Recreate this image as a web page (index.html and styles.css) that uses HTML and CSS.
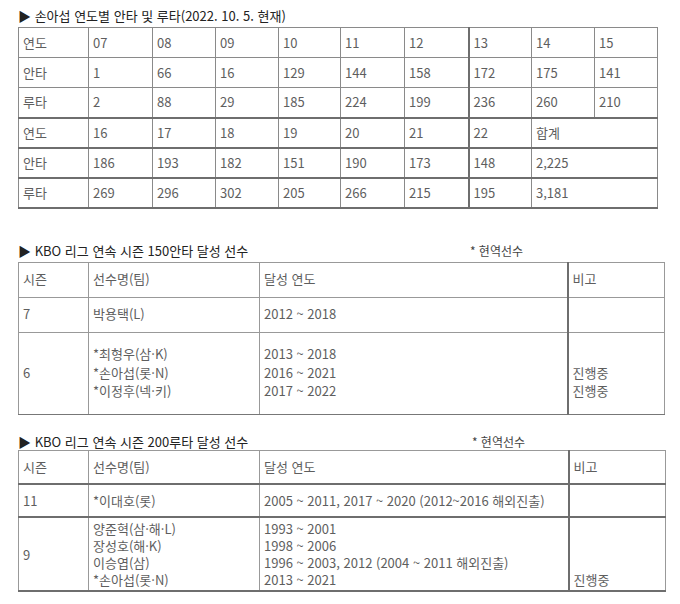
FILE: index.html
```html
<!DOCTYPE html>
<html lang="ko">
<head>
<meta charset="utf-8">
<link rel="stylesheet" href="styles.css">
</head>
<body>
<div class="page">
  <div class="title t1">▶ 손아섭 연도별 안타 및 루타(2022. 10. 5. 현재)</div>
  <table class="grid g1">
    <colgroup>
      <col style="width:70px"><col style="width:64px"><col style="width:63px"><col style="width:63px"><col style="width:62px"><col style="width:64px"><col style="width:64px"><col style="width:63px"><col style="width:63px"><col style="width:63px">
    </colgroup>
    <tr><td>연도</td><td>07</td><td>08</td><td>09</td><td>10</td><td>11</td><td class="sep">12</td><td>13</td><td>14</td><td>15</td></tr>
    <tr><td>안타</td><td>1</td><td>66</td><td>16</td><td>129</td><td>144</td><td class="sep">158</td><td>172</td><td>175</td><td>141</td></tr>
    <tr class="thick"><td>루타</td><td>2</td><td>88</td><td>29</td><td>185</td><td>224</td><td class="sep">199</td><td>236</td><td>260</td><td>210</td></tr>
    <tr class="thick"><td>연도</td><td>16</td><td>17</td><td>18</td><td>19</td><td>20</td><td class="sep">21</td><td>22</td><td colspan="2">합계</td></tr>
    <tr class="thick"><td>안타</td><td>186</td><td>193</td><td>182</td><td>151</td><td>190</td><td class="sep">173</td><td>148</td><td colspan="2">2,225</td></tr>
    <tr class="thick"><td>루타</td><td>269</td><td>296</td><td>302</td><td>205</td><td>266</td><td class="sep">215</td><td>195</td><td colspan="2">3,181</td></tr>
  </table>

  <div class="title t2"><span>▶ KBO 리그 연속 시즌 150안타 달성 선수</span><span class="note">* 현역선수</span></div>
  <table class="grid g2">
    <colgroup>
      <col style="width:70px"><col style="width:171px"><col style="width:308px"><col style="width:97px">
    </colgroup>
    <tr class="r35"><td>시즌</td><td>선수명(팀)</td><td class="sep">달성 연도</td><td>비고</td></tr>
    <tr class="r35"><td>7</td><td>박용택(L)</td><td class="sep">2012 ~ 2018</td><td></td></tr>
    <tr class="r82"><td>6</td><td>*최형우(삼·K)<br>*손아섭(롯·N)<br>*이정후(넥·키)</td><td class="sep">2013 ~ 2018<br>2016 ~ 2021<br>2017 ~ 2022</td><td><br>진행중<br>진행중</td></tr>
  </table>

  <div class="title t3"><span>▶ KBO 리그 연속 시즌 200루타 달성 선수</span><span class="note">* 현역선수</span></div>
  <table class="grid g3">
    <colgroup>
      <col style="width:70px"><col style="width:171px"><col style="width:309px"><col style="width:97px">
    </colgroup>
    <tr class="r34"><td>시즌</td><td>선수명(팀)</td><td class="sep">달성 연도</td><td>비고</td></tr>
    <tr class="r33 thick"><td>11</td><td>*이대호(롯)</td><td class="sep">2005 ~ 2011, 2017 ~ 2020 (2012~2016 해외진출)</td><td></td></tr>
    <tr class="r74"><td>9</td><td>양준혁(삼·해·L)<br>장성호(해·K)<br>이승엽(삼)<br>*손아섭(롯·N)</td><td class="sep">1993 ~ 2001<br>1998 ~ 2006<br>1996 ~ 2003, 2012 (2004 ~ 2011 해외진출)<br>2013 ~ 2021</td><td><br><br><br>진행중</td></tr>
  </table>
</div>
</body>
</html>
```

FILE: styles.css
```css
html, body {
  margin: 0;
  padding: 0;
  background: #ffffff;
}

body {
  font-family: "Noto Sans CJK KR", "Noto Sans", sans-serif;
  font-size: 13px;
  color: #5e5e5e;
}

.page {
  padding: 8px 0 0 18px;
}

.title {
  display: flex;
  height: 16px;
  line-height: 16px;
  color: #222222;
  font-size: 13px;
  white-space: nowrap;
}

.title .note {
  margin-left: auto;
}

.t1 { margin-bottom: 3px; }
.t2 { margin-top: 34px; margin-bottom: 3px; width: 505px; }
.t3 { margin-top: 19px; margin-bottom: 0; width: 507px; }

.note {
  color: #444444;
  font-size: 12px;
}

.grid {
  border-collapse: collapse;
  table-layout: fixed;
}

.g1 { width: 640px; }
.g2 { width: 647px; }
.g3 { width: 648px; }

.grid td {
  border: 1px solid #8a8a8a;
  padding: 0 4px;
  vertical-align: middle;
  white-space: nowrap;
  overflow: hidden;
}

.g1 tr { height: 30px; }
.g1 td { line-height: 18px; }

.grid td.sep {
  border-right: 2px solid #6e6e6e;
}

.grid tr.thick td {
  border-bottom: 2px solid #6e6e6e;
}

.g2 td { line-height: 18.5px; border-color: #999999; }
.g3 td { line-height: 17px; border-color: #999999; }

.r35 { height: 35px; }
.r82 { height: 82px; }
.r34 { height: 34px; }
.r33 { height: 33px; }
.r74 { height: 74px; }

.g3 tr.r34 td { border-bottom: 2px solid #6e6e6e; }
.g3 tr.r74 td { border-bottom: 2px solid #6e6e6e; }
.g2 tr.r82 td { border-bottom: 1px solid #777777; }
```
